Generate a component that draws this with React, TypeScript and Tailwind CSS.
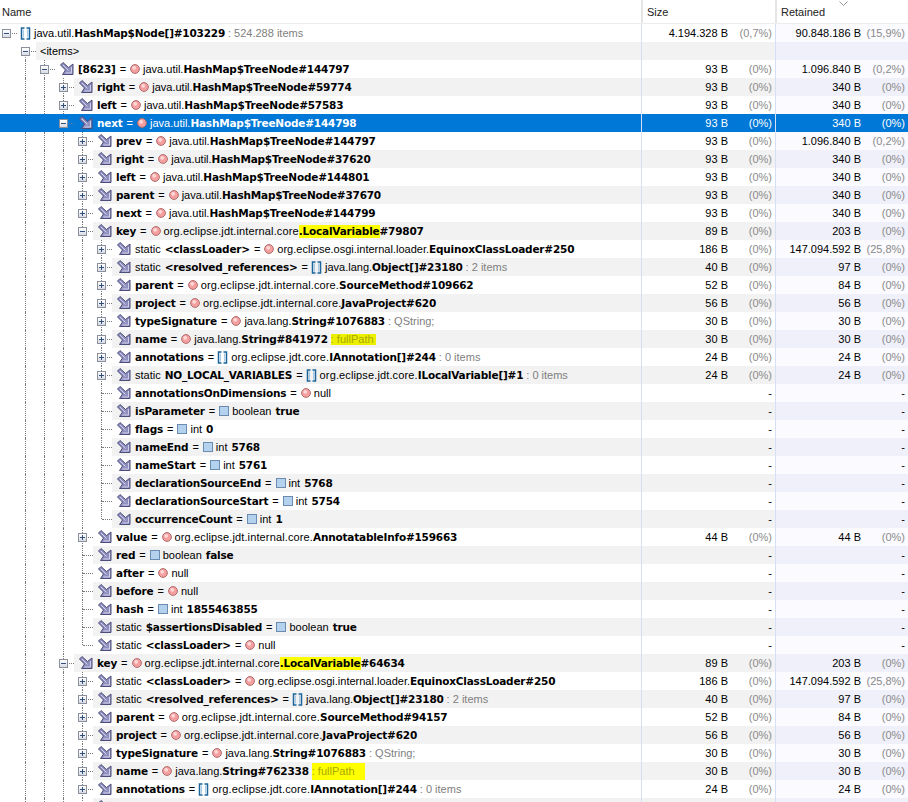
import type { ReactNode } from 'react'

const Ball = () => (
  <svg width="10" height="10" viewBox="0 0 10 10" className="inline-block shrink-0 ml-[4px] mr-[3px]">
    <circle cx="5" cy="5" r="4.4" fill="#f4a0a0" stroke="#b06a6a" />
    <circle cx="4.2" cy="3.8" r="1.9" fill="#fcd8d8" />
  </svg>
)

const Brackets = () => (
  <svg width="11" height="13" viewBox="0 0 11 13" className="inline-block shrink-0 ml-[3px] mr-[3px]">
    <path d="M3.5 2.5V10.5M7.5 2.5V10.5" stroke="#a8cbe6" />
    <path d="M4.5 1H1.5V12H4.5" fill="none" stroke="#1c659c" strokeWidth="1.5" />
    <path d="M6.5 1H9.5V12H6.5" fill="none" stroke="#1c659c" strokeWidth="1.5" />
  </svg>
)

const Prim = () => (
  <svg width="10" height="10" viewBox="0 0 10 10" className="inline-block shrink-0 ml-[4px] mr-[3px]">
    <rect x="0.5" y="0.5" width="9" height="9" fill="#b4d2ee" stroke="#6a8cb0" />
  </svg>
)

const FieldIcon = () => (
  <svg width="14" height="14" viewBox="0 0 14 14" className="shrink-0">
    <polygon points="3,0.5 0.5,3 5.5,8 2.5,12.5 13,12.5 13,2 8.5,5.5" fill="#8f8fc0" stroke="#4c4c78" />
    <path d="M3 3L8.5 8.5M5.5 11H11.5V5" fill="none" stroke="#d0d0ea" />
  </svg>
)

const Bold = ({ children, className = '' }: { children: ReactNode; className?: string }) => (
  <b className={`font-bold font-['DejaVu_Sans',sans-serif] text-[10.5px] tracking-[-0.2px] ${className}`}>{children}</b>
)

const Hi = ({ children }: { children: ReactNode }) => (
  <span className="inline-block bg-[#ffff00] leading-[13px]">{children}</span>
)

const Note = ({ children }: { children: ReactNode }) => (
  <span className="text-[#808080] ml-[3px]">{children}</span>
)

const Static = () => <span className="mr-[4px]">static</span>

// the jdt package names run a little wider than the rest in the picture
const Pkg = ({ name }: { name: string }) => (
  <span className={name.includes('jdt') ? 'tracking-[0.13px]' : ''}>{name}</span>
)

const Obj = ({ pkg, name }: { pkg: string; name: string }) => (
  <>
    <Ball />
    <Pkg name={pkg} />
    <Bold>{name}</Bold>
  </>
)

const Arr = ({ pkg, name }: { pkg: string; name: string }) => (
  <>
    <Brackets />
    <Pkg name={pkg} />
    <Bold>{name}</Bold>
  </>
)

const Null = () => (
  <>
    <Ball />
    <span>null</span>
  </>
)

const Val = ({ type, value }: { type: string; value: string }) => (
  <>
    <Prim />
    <span className="mr-[4px]">{type}</span>
    <Bold>{value}</Bold>
  </>
)

const K = ({ children }: { children: ReactNode }) => <Bold className="mr-[4px]">{children}</Bold>

type Node = {
  level: number
  exp?: '+' | '-'
  label: ReactNode
  noIcon?: boolean
  size?: [string, string]
  ret?: [string, string]
  selected?: boolean
}

const hm = 'java.util.'
const jdt = 'org.eclipse.jdt.internal.core.'

const nodes: Node[] = [
  {
    level: 0, exp: '-', noIcon: true, size: ['4.194.328 B', '(0,7%)'], ret: ['90.848.186 B', '(15,9%)'],
    label: <><Arr pkg={hm} name="HashMap$Node[]#103229" /><Note>: 524.288 items</Note></>,
  },
  { level: 1, exp: '-', noIcon: true, label: <span className="pl-[4px]">&lt;items&gt;</span> },
  { level: 2, exp: '-', size: ['93 B', '(0%)'], ret: ['1.096.840 B', '(0,2%)'], label: <><K>[8623]</K>=<Obj pkg={hm} name="HashMap$TreeNode#144797" /></> },
  { level: 3, exp: '+', size: ['93 B', '(0%)'], ret: ['340 B', '(0%)'], label: <><K>right</K>=<Obj pkg={hm} name="HashMap$TreeNode#59774" /></> },
  { level: 3, exp: '+', size: ['93 B', '(0%)'], ret: ['340 B', '(0%)'], label: <><K>left</K>=<Obj pkg={hm} name="HashMap$TreeNode#57583" /></> },
  { level: 3, exp: '-', selected: true, size: ['93 B', '(0%)'], ret: ['340 B', '(0%)'], label: <><K>next</K>=<Obj pkg={hm} name="HashMap$TreeNode#144798" /></> },
  { level: 4, exp: '+', size: ['93 B', '(0%)'], ret: ['1.096.840 B', '(0,2%)'], label: <><K>prev</K>=<Obj pkg={hm} name="HashMap$TreeNode#144797" /></> },
  { level: 4, exp: '+', size: ['93 B', '(0%)'], ret: ['340 B', '(0%)'], label: <><K>right</K>=<Obj pkg={hm} name="HashMap$TreeNode#37620" /></> },
  { level: 4, exp: '+', size: ['93 B', '(0%)'], ret: ['340 B', '(0%)'], label: <><K>left</K>=<Obj pkg={hm} name="HashMap$TreeNode#144801" /></> },
  { level: 4, exp: '+', size: ['93 B', '(0%)'], ret: ['340 B', '(0%)'], label: <><K>parent</K>=<Obj pkg={hm} name="HashMap$TreeNode#37670" /></> },
  { level: 4, exp: '+', size: ['93 B', '(0%)'], ret: ['340 B', '(0%)'], label: <><K>next</K>=<Obj pkg={hm} name="HashMap$TreeNode#144799" /></> },
  {
    level: 4, exp: '-', size: ['89 B', '(0%)'], ret: ['203 B', '(0%)'],
    label: <><K>key</K>=<Ball /><Pkg name="org.eclipse.jdt.internal.core" /><Hi><Bold>.LocalVariable</Bold></Hi><Bold>#79807</Bold></>,
  },
  { level: 5, exp: '+', size: ['186 B', '(0%)'], ret: ['147.094.592 B', '(25,8%)'], label: <><Static /><K>&lt;classLoader&gt;</K>=<Obj pkg="org.eclipse.osgi.internal.loader." name="EquinoxClassLoader#250" /></> },
  { level: 5, exp: '+', size: ['40 B', '(0%)'], ret: ['97 B', '(0%)'], label: <><Static /><K>&lt;resolved_references&gt;</K>=<Arr pkg="java.lang." name="Object[]#23180" /><Note>: 2 items</Note></> },
  { level: 5, exp: '+', size: ['52 B', '(0%)'], ret: ['84 B', '(0%)'], label: <><K>parent</K>=<Obj pkg={jdt} name="SourceMethod#109662" /></> },
  { level: 5, exp: '+', size: ['56 B', '(0%)'], ret: ['56 B', '(0%)'], label: <><K>project</K>=<Obj pkg={jdt} name="JavaProject#620" /></> },
  { level: 5, exp: '+', size: ['30 B', '(0%)'], ret: ['30 B', '(0%)'], label: <><K>typeSignature</K>=<Obj pkg="java.lang." name="String#1076883" /><Note>: QString;</Note></> },
  {
    level: 5, exp: '+', size: ['30 B', '(0%)'], ret: ['30 B', '(0%)'],
    label: <><K>name</K>=<Obj pkg="java.lang." name="String#841972" /><span className="inline-block ml-[3px] pr-[2px] bg-[#ecf000] text-[#a8a800] leading-[11px]">: fullPath</span></>,
  },
  { level: 5, exp: '+', size: ['24 B', '(0%)'], ret: ['24 B', '(0%)'], label: <><K>annotations</K>=<Arr pkg="org.eclipse.jdt.core." name="IAnnotation[]#244" /><Note>: 0 items</Note></> },
  { level: 5, exp: '+', size: ['24 B', '(0%)'], ret: ['24 B', '(0%)'], label: <><Static /><K>NO_LOCAL_VARIABLES</K>=<Arr pkg="org.eclipse.jdt.core." name="ILocalVariable[]#1" /><Note>: 0 items</Note></> },
  { level: 5, label: <><K>annotationsOnDimensions</K>=<Null /></> },
  { level: 5, label: <><K>isParameter</K>=<Val type="boolean" value="true" /></> },
  { level: 5, label: <><K>flags</K>=<Val type="int" value="0" /></> },
  { level: 5, label: <><K>nameEnd</K>=<Val type="int" value="5768" /></> },
  { level: 5, label: <><K>nameStart</K>=<Val type="int" value="5761" /></> },
  { level: 5, label: <><K>declarationSourceEnd</K>=<Val type="int" value="5768" /></> },
  { level: 5, label: <><K>declarationSourceStart</K>=<Val type="int" value="5754" /></> },
  { level: 5, label: <><K>occurrenceCount</K>=<Val type="int" value="1" /></> },
  { level: 4, exp: '+', size: ['44 B', '(0%)'], ret: ['44 B', '(0%)'], label: <><K>value</K>=<Obj pkg={jdt} name="AnnotatableInfo#159663" /></> },
  { level: 4, label: <><K>red</K>=<Val type="boolean" value="false" /></> },
  { level: 4, label: <><K>after</K>=<Null /></> },
  { level: 4, label: <><K>before</K>=<Null /></> },
  { level: 4, label: <><K>hash</K>=<Val type="int" value="1855463855" /></> },
  { level: 4, label: <><Static /><K>$assertionsDisabled</K>=<Val type="boolean" value="true" /></> },
  { level: 4, label: <><Static /><K>&lt;classLoader&gt;</K>=<Null /></> },
  {
    level: 3, exp: '-', size: ['89 B', '(0%)'], ret: ['203 B', '(0%)'],
    label: <><K>key</K>=<Ball /><Pkg name="org.eclipse.jdt.internal.core" /><Hi><Bold>.LocalVariable</Bold></Hi><Bold>#64634</Bold></>,
  },
  { level: 4, exp: '+', size: ['186 B', '(0%)'], ret: ['147.094.592 B', '(25,8%)'], label: <><Static /><K>&lt;classLoader&gt;</K>=<Obj pkg="org.eclipse.osgi.internal.loader." name="EquinoxClassLoader#250" /></> },
  { level: 4, exp: '+', size: ['40 B', '(0%)'], ret: ['97 B', '(0%)'], label: <><Static /><K>&lt;resolved_references&gt;</K>=<Arr pkg="java.lang." name="Object[]#23180" /><Note>: 2 items</Note></> },
  { level: 4, exp: '+', size: ['52 B', '(0%)'], ret: ['84 B', '(0%)'], label: <><K>parent</K>=<Obj pkg={jdt} name="SourceMethod#94157" /></> },
  { level: 4, exp: '+', size: ['56 B', '(0%)'], ret: ['56 B', '(0%)'], label: <><K>project</K>=<Obj pkg={jdt} name="JavaProject#620" /></> },
  { level: 4, exp: '+', size: ['30 B', '(0%)'], ret: ['30 B', '(0%)'], label: <><K>typeSignature</K>=<Obj pkg="java.lang." name="String#1076883" /><Note>: QString;</Note></> },
  {
    level: 4, exp: '+', size: ['30 B', '(0%)'], ret: ['30 B', '(0%)'],
    label: <><K>name</K>=<Obj pkg="java.lang." name="String#762338" /><span className="inline-block ml-[3px] pr-[10px] bg-[#ffff00] text-[#a8a800] leading-[17px]">: fullPath</span></>,
  },
  { level: 4, exp: '+', size: ['24 B', '(0%)'], ret: ['24 B', '(0%)'], label: <><K>annotations</K>=<Arr pkg="org.eclipse.jdt.core." name="IAnnotation[]#244" /><Note>: 0 items</Note></> },
  { level: 4, exp: '+', label: <span /> },
]

// does the level-k line carry on below row i
const continues = (i: number, k: number) => {
  for (let j = i + 1; j < nodes.length; j++) {
    if (nodes[j].level === k) return true
    if (nodes[j].level < k) return false
  }
  return k > 0
}

const Expander = ({ sign }: { sign: '+' | '-' }) => (
  <span className="absolute left-[5px] top-[5px] w-[9px] h-[9px] border border-[#8a8f9c] bg-gradient-to-b from-white to-[#d9dce6] flex items-center justify-center">
    <svg width="7" height="7" viewBox="0 0 7 7">
      <path d={sign === '+' ? 'M1 3.5H6M3.5 1V6' : 'M1 3.5H6'} stroke="#33507c" />
    </svg>
  </span>
)

const Num = ({ cell, selected }: { cell?: [string, string]; selected?: boolean }) => (
  <>
    <span className="whitespace-pre">{cell ? cell[0] : ''}</span>
    <span className={`w-[44px] text-right whitespace-pre ${selected ? 'text-white' : cell ? 'text-[#8a8a8a]' : 'text-black'}`}>
      {cell ? cell[1] : '-'}
    </span>
  </>
)

const Row = ({ node, index }: { node: Node; index: number }) => {
  const striped = index % 2 === 1
  const sel = !!node.selected
  const empty = index === 1 || index === nodes.length - 1
  const levels = Array.from({ length: node.level }, (_, k) => k)
  const sizeBg = sel ? 'bg-[#0078d7]' : striped ? 'bg-[#f2f2f2]' : 'bg-white'
  const retBg = sel ? 'bg-[#0078d7]' : striped ? 'bg-[#f0f0fa]' : 'bg-[#fafaff]'
  return (
    <div className={`flex h-[18px] shrink-0 ${sel ? 'bg-[#0078d7] text-white' : 'text-black'}`}>
      <div className="w-[641px] shrink-0 flex overflow-hidden">
        <div className="flex shrink-0 -ml-[3px]">
          {levels.map((k) => (
            <div key={k} className="w-[19px] h-[18px] shrink-0">
              {!sel && continues(index, k) && k > 0 && (
                <div className="ml-[9px] h-full border-l border-dotted border-[#7a7a7a]" />
              )}
            </div>
          ))}
          <div className="relative w-[19px] h-[18px] shrink-0">
            {!sel && node.level > 1 && (
              <div className="absolute left-[9px] top-0 h-[9px] border-l border-dotted border-[#7a7a7a]" />
            )}
            {!sel && node.level > 0 && continues(index, node.level) && (
              <div className="absolute left-[9px] top-[9px] h-[9px] border-l border-dotted border-[#7a7a7a]" />
            )}
            <div className="absolute left-[10px] top-[9px] w-[10px] border-t border-dotted border-[#7a7a7a]" />
            {node.exp && <Expander sign={node.exp} />}
          </div>
        </div>
        <div className={`flex-1 min-w-0 ml-[1px] flex items-center whitespace-pre ${sel ? '' : striped ? 'bg-[#f2f2f2]' : ''}`}>
          {!node.noIcon && <span className="ml-[5px] mr-[4px]"><FieldIcon /></span>}
          <span className="flex items-center">{node.label}</span>
        </div>
      </div>
      <div className="w-[1px] bg-[#d6dff5] shrink-0" />
      <div className={`w-[133px] shrink-0 flex items-center justify-end pr-[3px] ${sizeBg}`}>
        {!empty && <Num cell={node.size} selected={sel} />}
      </div>
      <div className="w-[1px] bg-[#d6dff5] shrink-0" />
      <div className={`flex-1 flex items-center justify-end pr-[3px] ${retBg}`}>
        {!empty && <Num cell={node.ret} selected={sel} />}
      </div>
    </div>
  )
}

export default function App() {
  return (
    <div className="w-[908px] h-[802px] overflow-hidden flex flex-col bg-white text-[11px] leading-[18px] font-['Liberation_Sans',sans-serif]">
      <div className="flex h-[24px] shrink-0 text-[#222] border-b border-[#ececec]">
        <div className="w-[641px] shrink-0 flex items-center pl-[2px]">Name</div>
        <div className="w-[2px] shrink-0 bg-[#e5e5e5]" />
        <div className="w-[132px] shrink-0 flex items-center pl-[4px]">Size</div>
        <div className="w-[2px] shrink-0 bg-[#e5e5e5]" />
        <div className="relative flex-1 flex items-center pl-[4px]">
          Retained
          <svg width="9" height="5" viewBox="0 0 9 5" className="absolute left-[62px] top-[1px]">
            <path d="M0.5 0.5L4.5 4.5L8.5 0.5" fill="none" stroke="#9a9a9a" />
          </svg>
        </div>
      </div>
      <div className="flex flex-col">
        {nodes.map((n, i) => (
          <Row key={i} node={n} index={i} />
        ))}
      </div>
    </div>
  )
}
